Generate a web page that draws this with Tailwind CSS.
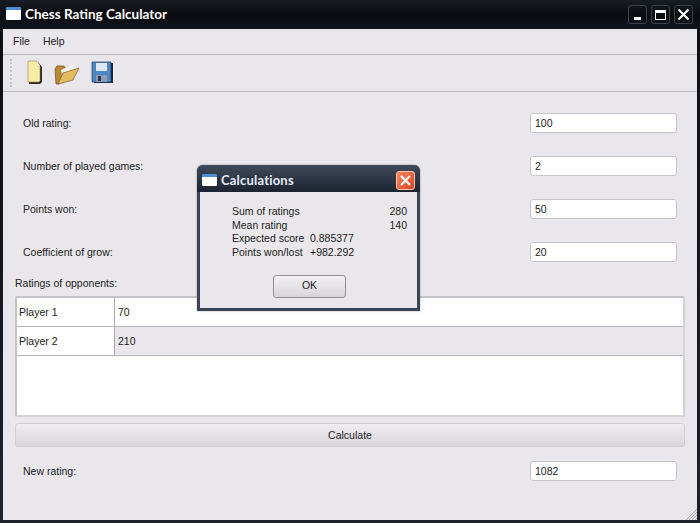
<!DOCTYPE html>
<html lang="en">
<head>
  <meta charset="UTF-8" />
  <title>Chess Rating Calculator</title>
  <script src="https://cdn.jsdelivr.net/npm/@tailwindcss/browser@4"></script>
</head>
<body class="bg-[#14181f]">
  <div class="relative w-[700px] h-[523px] overflow-hidden flex flex-col font-['Liberation_Sans',sans-serif] text-[10.5px] text-[#222] bg-gradient-to-b from-[#0b0d12] to-[#1d222c] rounded-t-md">

    <!-- Title bar -->
    <div class="h-[29px] shrink-0 flex items-center pl-[6px] pr-[7px] bg-gradient-to-b from-[#1a1d24] via-[#0a0c11] to-[#12151b]">
      <div class="w-[15px] h-[13px] bg-white border-t-[3px] border-[#4d8fd6] rounded-[1px] mb-[3px]"></div>
      <span class="ml-[4px] font-['Lato',sans-serif] font-bold text-[13.5px] text-white">Chess Rating Calculator</span>
      <div class="ml-auto flex gap-[4px]">
        <div class="w-[19px] h-[19px] border border-[#3a4250] rounded-[3px] flex items-end justify-center pb-[3px]">
          <div class="w-[7px] h-[3px] bg-white"></div>
        </div>
        <div class="w-[19px] h-[19px] border border-[#3a4250] rounded-[3px] flex items-center justify-center">
          <div class="w-[11px] h-[10px] border border-white border-t-[3px]"></div>
        </div>
        <div class="w-[19px] h-[19px] border border-[#3a4250] rounded-[3px] flex items-center justify-center">
          <svg width="13" height="13" viewBox="0 0 13 13"><path d="M1.5 1.5 11.5 11.5M11.5 1.5 1.5 11.5" stroke="#fff" stroke-width="2.2" /></svg>
        </div>
      </div>
    </div>

    <!-- Client area -->
    <div class="relative flex-1 mx-[3px] mb-[3px] bg-[#e9e7ec] flex flex-col min-h-0">
      <!-- Menu -->
      <div class="h-[26px] shrink-0 flex items-center gap-[13px] pl-[10px] border-b border-[#b9b8bc]">
        <span>File</span>
        <span>Help</span>
      </div>

      <!-- Toolbar -->
      <div class="h-[37px] shrink-0 flex items-center border-b border-[#b9b8bc] pl-[7px]">
        <div class="w-[4px] h-[28px] border-l-2 border-dotted border-[#c4c3c7]"></div>
        <svg class="ml-[11px]" width="20" height="26" viewBox="0 0 20 26">
          <path d="M4 2H13L17 7V22L15 24H4Z" fill="#2b2a20" />
          <path d="M3 1H12L15 6V21L14 22H3Z" fill="#f7eda6" stroke="#8d8450" stroke-width=".6" />
          <path d="M12 1V6H15Z" fill="#fffbe0" />
        </svg>
        <svg class="ml-[9px]" width="26" height="26" viewBox="0 0 26 26">
          <path d="M1 9 3 6H10L11 8H20V12L5 24H2Z" fill="#b9893a" stroke="#6e5120" stroke-width=".7" />
          <path d="M7 10 20 4 22 11 9 20Z" fill="#f4f1e6" />
          <path d="M4 24 9 13 25 8 19 20Z" fill="#e5bb61" stroke="#7c5b24" stroke-width=".7" />
        </svg>
        <svg class="ml-[11px]" width="24" height="26" viewBox="0 0 24 26">
          <path d="M3 3H22V23H3Z" fill="#1c2440" />
          <path d="M1 2H20V22H1Z" fill="#4f86c4" stroke="#213a66" stroke-width=".7" />
          <path d="M5 3H16V11H5Z" fill="#dfe8f2" />
          <path d="M5 15H16V22H5Z" fill="#8c9db3" />
          <path d="M7 16H10V21H7Z" fill="#2a3a58" />
        </svg>
      </div>

      <!-- Form -->
      <div class="flex-1 flex flex-col px-[12px] pt-[21px]">
        <div class="flex flex-col gap-[23px] pl-[8px] pr-[8px]">
          <div class="flex items-center justify-between h-[20px]">
            <span class="pt-[1px]">Old rating:</span>
            <div class="w-[147px] h-[20px] px-[4px] pt-[1px] flex items-center bg-white border border-[#c6c5c9] rounded-[3px]">100</div>
          </div>
          <div class="flex items-center justify-between h-[20px]">
            <span class="pt-[1px]">Number of played games:</span>
            <div class="w-[147px] h-[20px] px-[4px] pt-[1px] flex items-center bg-white border border-[#c6c5c9] rounded-[3px]">2</div>
          </div>
          <div class="flex items-center justify-between h-[20px]">
            <span class="pt-[1px]">Points won:</span>
            <div class="w-[147px] h-[20px] px-[4px] pt-[1px] flex items-center bg-white border border-[#c6c5c9] rounded-[3px]">50</div>
          </div>
          <div class="flex items-center justify-between h-[20px]">
            <span class="pt-[1px]">Coefficient of grow:</span>
            <div class="w-[147px] h-[20px] px-[4px] pt-[1px] flex items-center bg-white border border-[#c6c5c9] rounded-[3px]">20</div>
          </div>
        </div>

        <div class="mt-[11px] h-[20px] pt-[1px] flex items-center">Ratings of opponents:</div>

        <!-- Table -->
        <div class="mt-[3px] h-[121px] bg-white border-2 border-[#c4c3c7] border-b-[#d2d1d5] border-r-[#d2d1d5] rounded-[2px] flex flex-col">
          <div class="flex h-[29px] border-b border-[#b8b7bb]">
            <div class="w-[98px] px-[2px] pt-[1px] flex items-center border-r border-[#a9a8ac]">Player 1</div>
            <div class="flex-1 px-[3px] pt-[1px] flex items-center">70</div>
          </div>
          <div class="flex h-[29px] border-b border-[#b8b7bb]">
            <div class="w-[98px] px-[2px] pt-[1px] flex items-center border-r border-[#a9a8ac]">Player 2</div>
            <div class="flex-1 px-[3px] pt-[1px] flex items-center bg-[#e9e7ec]">210</div>
          </div>
        </div>

        <!-- Calculate -->
        <div class="mt-[6px] h-[24px] pt-[1px] flex items-center justify-center border border-[#cfced2] rounded-[3px] bg-gradient-to-b from-[#efedf1] to-[#d9d7dc]">Calculate</div>

        <div class="mt-[14px] flex items-center justify-between h-[20px] pl-[8px] pr-[8px]">
          <span class="pt-[1px]">New rating:</span>
          <div class="w-[147px] h-[20px] px-[4px] pt-[1px] flex items-center bg-white border border-[#c6c5c9] rounded-[3px]">1082</div>
        </div>
      </div>

      <!-- Size grip -->
      <svg class="absolute right-0 bottom-0" width="12" height="12" viewBox="0 0 12 12">
        <path d="M12 1 1 12M12 4 4 12M12 7 7 12M12 10 10 12" stroke="#a5a4a8" stroke-width="1" />
      </svg>
    </div>

    <!-- Calculations dialog -->
    <div class="absolute left-[197px] top-[165px] w-[223px] h-[146px] flex flex-col rounded-t-[6px] bg-[#3d4552] p-[3px] pt-0 shadow-[0_0_2px_rgba(0,0,0,0.4)]">
      <div class="h-[27px] shrink-0 flex items-center pl-[5px] pr-[5px] pt-[3px] bg-gradient-to-b from-[#414b5b] to-[#1c2330] rounded-t-[6px] -mx-[3px]">
        <div class="w-[15px] h-[12px] bg-white border-t-[3px] border-[#4d8fd6] rounded-[1px]"></div>
        <span class="ml-[4px] pt-[1px] font-['Lato',sans-serif] font-bold text-[13px] tracking-[0.2px] text-[#e6ecf8]">Calculations</span>
        <div class="ml-auto w-[19px] h-[19px] rounded-[3px] bg-gradient-to-br from-[#f08a5e] to-[#d9401c] border border-[#f5c3ae] flex items-center justify-center">
          <svg width="13" height="13" viewBox="0 0 13 13"><path d="M2 2 11 11M11 2 2 11" stroke="#fff" stroke-width="2.2" /></svg>
        </div>
      </div>
      <div class="flex-1 bg-[#e9e7ec] flex flex-col pl-[32px] pr-[10px] pt-[13px]">
        <div class="grid grid-cols-[78px_1fr] leading-[13.7px]">
          <span>Sum of ratings</span><span class="text-right">280</span>
          <span>Mean rating</span><span class="text-right">140</span>
          <span>Expected score</span><span>0.885377</span>
          <span>Points won/lost</span><span>+982.292</span>
        </div>
        <div class="mt-[15px] self-start ml-[41px] w-[73px] h-[23px] flex items-center justify-center border border-[#8f8e92] rounded-[3px] bg-gradient-to-b from-[#f3f1f5] to-[#d6d4d9]">OK</div>
      </div>
    </div>
  </div>
</body>
</html>
